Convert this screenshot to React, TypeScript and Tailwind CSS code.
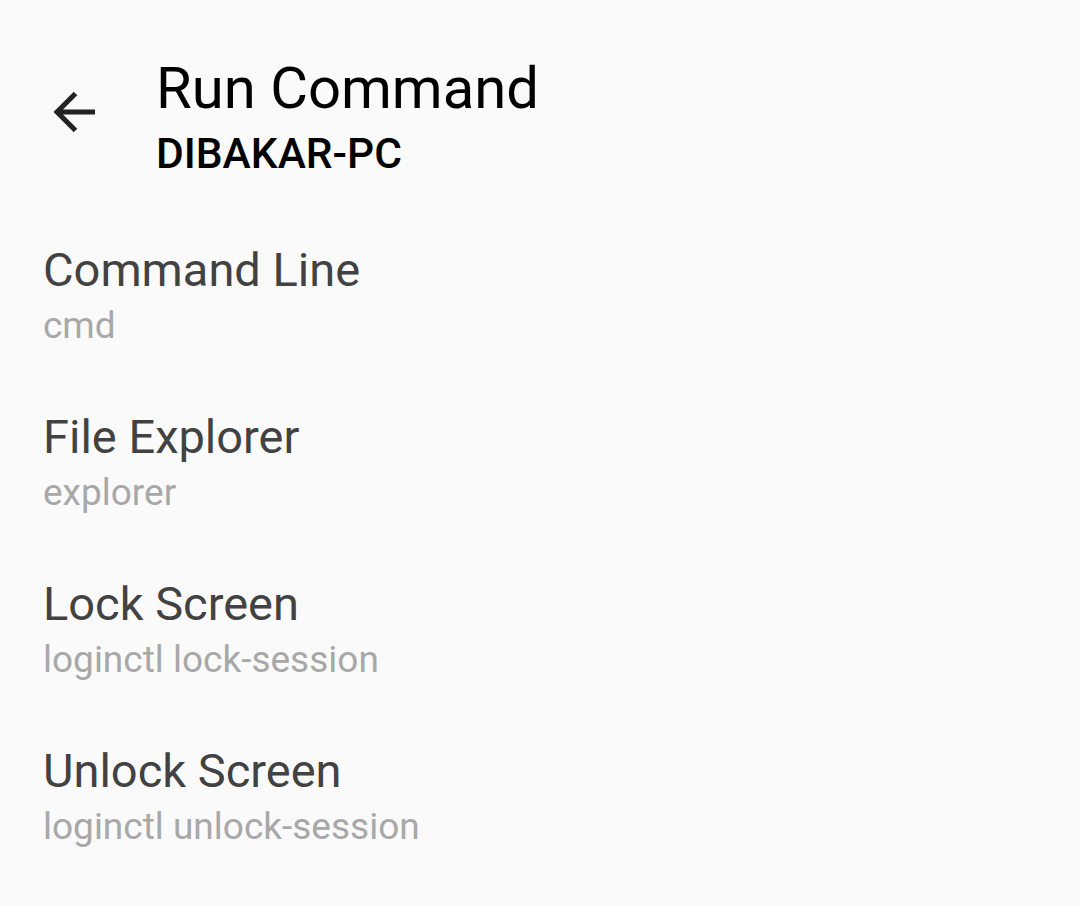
import React from "react";

const items = [
  { title: "Command Line", cmd: "cmd" },
  { title: "File Explorer", cmd: "explorer" },
  { title: "Lock Screen", cmd: "loginctl lock-session" },
  { title: "Unlock Screen", cmd: "loginctl unlock-session" },
];

export default function App() {
  return (
    <div
      className="w-[1080px] h-[906px] bg-[#fafafa] overflow-hidden"
      style={{ fontFamily: "Roboto, 'Noto Sans', sans-serif" }}
    >
      <div className="flex pt-[52px]">
        <div className="w-[156px] flex justify-start">
          <div className="ml-[42px] mt-[28px] w-[64px] h-[64px] flex items-center justify-center">
            <svg width="64" height="64" viewBox="0 0 64 64" fill="none">
              <path
                d="M53 32H16M33.5 13.5L15 32L33.5 50.5"
                stroke="#222222"
                strokeWidth="5"
                strokeLinecap="butt"
                strokeLinejoin="miter"
              />
            </svg>
          </div>
        </div>
        <div className="flex flex-col">
          <div className="text-[58px] leading-[72px] text-[#000000] font-normal">Run Command</div>
          <div className="mt-[2px] text-[42.5px] leading-[56px] text-[#000000] font-medium">DIBAKAR-PC</div>
        </div>
      </div>
      <div className="mt-[30px] flex flex-col">
        {items.map((it) => (
          <div key={it.title} className="px-[43px] py-[30px] flex flex-col">
            <div className="text-[47px] leading-[56px] text-[#424242]">{it.title}</div>
            <div className="mt-[5px] text-[37px] leading-[46px] text-[#a8a8a8]">{it.cmd}</div>
          </div>
        ))}
      </div>
    </div>
  );
}
